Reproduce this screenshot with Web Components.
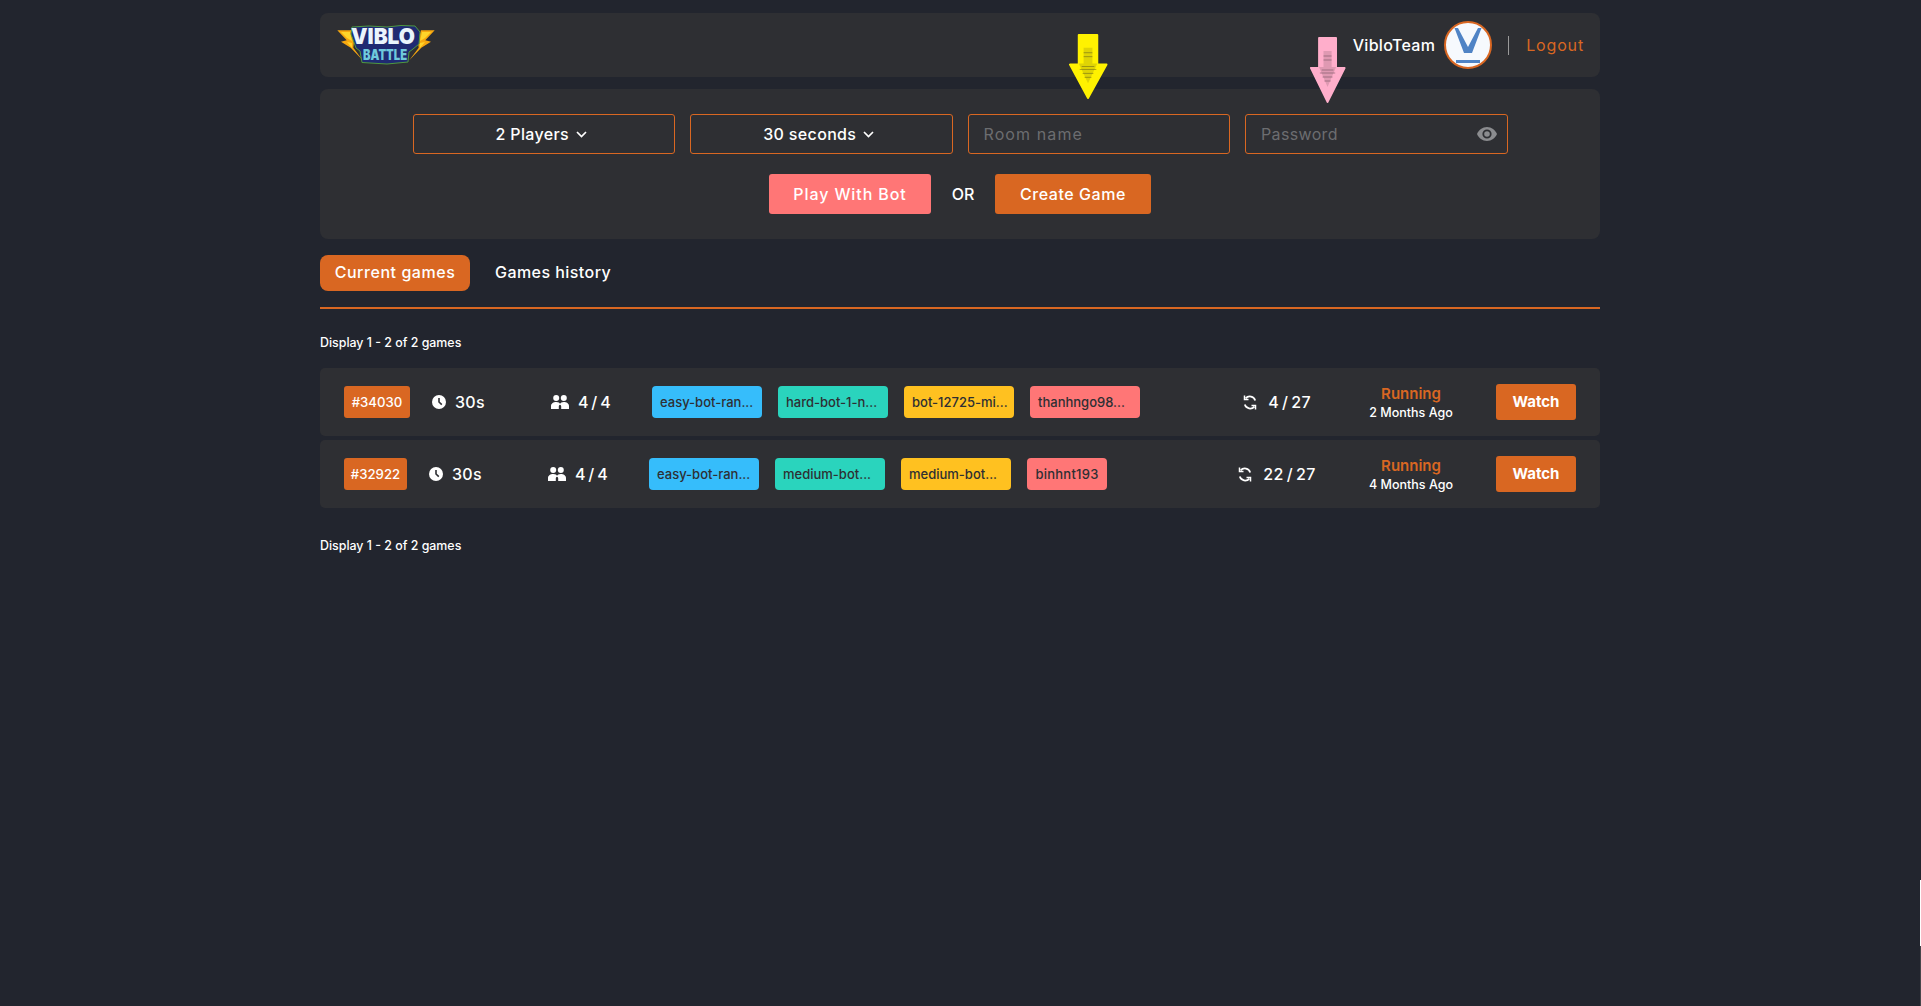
<!DOCTYPE html>
<html>
<head>
<meta charset="utf-8">
<title>Viblo Battle</title>
<style>
  html, body { margin: 0; min-height: 100%; background: #22252e; }
  body { width: 1920px; min-height: 1006px; color: #fff; font-family: Inter, "Open Sans", sans-serif; overflow: hidden; }
</style>
</head>
<body>
<battle-app></battle-app>
<edge-strip></edge-strip>

<script>
const ORANGE = '#d96722';

class BattleLogo extends HTMLElement {
  constructor() {
    super();
    this.attachShadow({ mode: 'open' });
    this.shadowRoot.innerHTML = `
      <style>
        :host { display: block; width: 98px; height: 42px; }
        svg { display: block; overflow: visible; }
        text { font-family: Inter, sans-serif; font-weight: 900; text-anchor: middle; paint-order: stroke; }
      </style>
      <svg width="98" height="42" viewBox="0 0 98 42">
        <path d="M0.3 6.3 H14 L17 17 L16.3 23.7 L25.7 36.3 L13.7 23.7 L4 17.7 L9.7 16.3 Z" fill="#f7a80f"/>
        <path d="M4 8 H13 L15 17 L10 14 Z M10 18 L15 19 L15 24 Z" fill="#ffd52a"/>
        <path d="M97.7 6.3 H84 L81 17 L81.7 23.7 L72.3 36.3 L84.3 23.7 L94 17.7 L88.3 16.3 Z" fill="#f7a80f"/>
        <path d="M94 8 H85 L83 17 L88 14 Z M88 18 L83 19 L83 24 Z" fill="#ffd52a"/>
        <path d="M15 3 L32 2 L50 3 L64 1.5 L78 2 L83 8 L82 20 L76 25 L72 28 L71 38 L50 40 L25 38.5 L23 27 L19 24 L14 10 Z" fill="#1f2a72" stroke="#4f9a40" stroke-width="1"/>
        <text x="46" y="20" font-size="22" fill="#eaf5fc" textLength="64" lengthAdjust="spacingAndGlyphs">VIBLO</text>
        <text x="48" y="36" font-size="14" fill="#6fc9dc" textLength="44" lengthAdjust="spacingAndGlyphs">BATTLE</text>
      </svg>`;
  }
}

class UserAvatar extends HTMLElement {
  constructor() {
    super();
    this.attachShadow({ mode: 'open' });
    this.shadowRoot.innerHTML = `
      <style>
        :host { display: block; width: 48px; height: 48px; }
        svg { display: block; }
      </style>
      <svg width="48" height="48" viewBox="0 0 48 48">
        <circle cx="24" cy="24" r="23" fill="#f6f9fd" stroke="${ORANGE}" stroke-width="2"/>
        <path d="M10.5 7 L14 7 L24 26 L34 7 L37.5 7 L28 32 L20 32 Z" fill="#4f83c5"/>
        <rect x="12" y="39" width="24" height="3" fill="#4f83c5"/>
      </svg>`;
  }
}

class TopBar extends HTMLElement {
  constructor() {
    super();
    this.attachShadow({ mode: 'open' });
    this.shadowRoot.innerHTML = `
      <style>
        :host {
          display: flex;
          align-items: center;
          justify-content: space-between;
          height: 64px;
          padding: 0 16px 0 17px;
          box-sizing: border-box;
          background: #2e2f33;
          border-radius: 8px;
        }
        .user { display: flex; align-items: center; font-size: 16px; font-weight: 500; letter-spacing: 0.3px; }
        .user user-avatar { margin-left: 9px; }
        .sep { width: 1px; height: 19px; background: #9a9a9a; margin: 0 17px 0 16px; }
        .logout { color: ${ORANGE}; font-weight: 400; letter-spacing: 0.85px; }
      </style>
      <battle-logo></battle-logo>
      <div class="user">
        <span>VibloTeam</span>
        <user-avatar></user-avatar>
        <span class="sep"></span>
        <span class="logout">Logout</span>
      </div>`;
  }
}

class FieldBox extends HTMLElement {
  constructor() {
    super();
    this.attachShadow({ mode: 'open' });
    const chevron = `<svg class="chev" width="11" height="7" viewBox="0 0 11 7"><path d="M1 1 L5.5 5.5 L10 1" fill="none" stroke="#fff" stroke-width="1.7"/></svg>`;
    const eye = `<svg class="eye" width="20" height="14" viewBox="0 0 20 14"><path fill-rule="evenodd" fill="#8b8c8f" d="M10 0C5.5 0 1.7 2.9 0 7c1.7 4.1 5.5 7 10 7s8.3-2.9 10-7c-1.7-4.1-5.5-7-10-7zm0 11.6A4.6 4.6 0 1 1 10 2.4a4.6 4.6 0 0 1 0 9.2zm0-7.4a2.8 2.8 0 1 0 0 5.6 2.8 2.8 0 0 0 0-5.6z"/></svg>`;
    const kind = this.getAttribute('kind');
    this.shadowRoot.innerHTML = `
      <style>
        :host {
          display: flex;
          align-items: center;
          height: 40px;
          box-sizing: border-box;
          border: 1px solid ${ORANGE};
          border-radius: 3px;
          padding: 0 15px;
          font-size: 16px;
          letter-spacing: 0.35px;
        }
        :host([kind="select"]) { justify-content: center; font-weight: 500; padding-right: 20px; }
        :host([kind="input"]) { color: #6c6d70; }
        .chev { margin-left: 7px; }
        .eye { margin-left: auto; margin-right: -5px; }
      </style>
      <slot></slot>${kind === 'select' ? chevron : ''}${this.hasAttribute('eye') ? eye : ''}`;
  }
}

class ActionButton extends HTMLElement {
  constructor() {
    super();
    this.attachShadow({ mode: 'open' });
    this.shadowRoot.innerHTML = `
      <style>
        :host {
          display: inline-flex;
          align-items: center;
          justify-content: center;
          height: 40px;
          box-sizing: border-box;
          border-radius: 3px;
          background: var(--bg, ${ORANGE});
          font-size: 16px;
          font-weight: 500;
          letter-spacing: 0.35px;
        }
      </style>
      <slot></slot>`;
  }
}

class CreatePanel extends HTMLElement {
  constructor() {
    super();
    this.attachShadow({ mode: 'open' });
    this.shadowRoot.innerHTML = `
      <style>
        :host {
          display: block;
          height: 150px;
          box-sizing: border-box;
          padding-top: 25px;
          background: #2e2f33;
          border-radius: 8px;
        }
        .fields { display: grid; grid-template-columns: repeat(4, 262.5px); gap: 15px; justify-content: center; }
        .actions { display: flex; justify-content: center; align-items: center; margin-top: 20px; }
        .bot { --bg: #ff7676; width: 162px; letter-spacing: 0.9px; }
        .create { width: 156px; letter-spacing: 0.55px; }
        .or { width: 64px; text-align: center; font-size: 16px; font-weight: 500; padding-bottom: 1px; }
        .room { letter-spacing: 1.1px; }
      </style>
      <div class="fields">
        <field-box kind="select">2 Players</field-box>
        <field-box kind="select">30 seconds</field-box>
        <field-box kind="input" class="room">Room name</field-box>
        <field-box kind="input" eye>Password</field-box>
      </div>
      <div class="actions">
        <action-button class="bot">Play With Bot</action-button>
        <span class="or">OR</span>
        <action-button class="create">Create Game</action-button>
      </div>`;
  }
}

class GameTabs extends HTMLElement {
  constructor() {
    super();
    this.attachShadow({ mode: 'open' });
    this.shadowRoot.innerHTML = `
      <style>
        :host {
          display: flex;
          align-items: center;
          margin-top: 16px;
          padding-bottom: 16px;
          border-bottom: 2px solid ${ORANGE};
          font-size: 16px;
          font-weight: 500;
          letter-spacing: 0.45px;
        }
        .tab { height: 36px; display: flex; align-items: center; padding: 0 14px 2px; box-sizing: border-box; border-radius: 8px; }
        .tab.on { background: ${ORANGE}; width: 150px; justify-content: center; padding: 0 0 2px; margin-right: 11px; letter-spacing: 0.55px; }
      </style>
      <div class="tab on">Current games</div>
      <div class="tab">Games history</div>`;
  }
}

class PlayerTag extends HTMLElement {
  constructor() {
    super();
    this.attachShadow({ mode: 'open' });
    this.shadowRoot.innerHTML = `
      <style>
        :host {
          display: block;
          width: 110px;
          height: 32px;
          line-height: 32px;
          box-sizing: border-box;
          padding: 0 8px;
          border-radius: 4px;
          background: var(--tag);
          color: #2e2f33;
          font-size: 13px;
          font-weight: 500;
          white-space: nowrap;
          flex: none;
        }
        :host([short]) { width: 80px; text-align: center; padding: 0; letter-spacing: 0.25px; }
      </style>
      <slot></slot>`;
  }
}

class GameRow extends HTMLElement {
  constructor() {
    super();
    this.attachShadow({ mode: 'open' });
    const a = (n) => this.getAttribute(n);
    this.shadowRoot.innerHTML = `
      <style>
        :host {
          display: flex;
          align-items: center;
          height: 68px;
          box-sizing: border-box;
          padding: 0 24px;
          background: #2e2f33;
          border-radius: 5px;
        }
        .id {
          width: ${a('idw')}px;
          height: 32px;
          line-height: 32px;
          text-align: center;
          border-radius: 3px;
          background: ${ORANGE};
          font-size: 13.2px;
          font-weight: 500;
          margin-right: 22px;
          flex: none;
        }
        .stat { display: flex; align-items: center; font-size: 16px; font-weight: 500; letter-spacing: 0.3px; padding-bottom: 1px; box-sizing: border-box; }
        .stat svg { margin-top: 1px; flex: none; }
        .time { width: 119px; gap: 9px; }
        .players { width: 101px; gap: 9px; word-spacing: -2px; }
        .tags { display: flex; gap: 16px; }
        .turns { margin-left: auto; width: 154px; justify-content: center; gap: 11px; word-spacing: -1.5px; }
        .status { width: 114px; margin: 2px 28px 0 0; text-align: center; }
        .run { color: ${ORANGE}; font-size: 15px; font-weight: 600; line-height: 18px; }
        .ago { font-size: 12.5px; font-weight: 500; line-height: 18px; margin-top: 1px; }
        .watch { width: 80px; height: 36px; padding-bottom: 2px; font-size: 15px; font-weight: 700; letter-spacing: 0; }
      </style>
      <span class="id">${a('game')}</span>
      <span class="stat time">
        <svg width="14" height="14" viewBox="0 0 14 14"><circle cx="7" cy="7" r="7" fill="#fff"/><path d="M7 3 V7 L9.8 9.6" fill="none" stroke="#2e2f33" stroke-width="1.6"/></svg>
        30s
      </span>
      <span class="stat players">
        <svg width="18" height="14" viewBox="0 0 18 14"><circle cx="5.2" cy="3" r="3" fill="#fff"/><circle cx="12.8" cy="3" r="3" fill="#fff"/><path d="M0 14 V11 C0 8.5 2.5 7 5.2 7 C7.6 7 8.7 8 9 8.8 C9.6 8 10.6 7 12.8 7 C15.5 7 18 8.5 18 11 V14 H10.2 V11.5 C10.2 10.8 9.9 10.2 9 9.8 C8.1 10.2 7.8 10.8 7.8 11.5 V14 Z" fill="#fff"/></svg>
        4 / 4
      </span>
      <div class="tags"><slot></slot></div>
      <span class="stat turns">
        <svg width="14" height="15" viewBox="0 0 14 15" fill="none" stroke="#fff" stroke-width="1.7"><path d="M12.2 5.4 A5.6 5.6 0 0 0 2.6 3.4"/><path d="M1.8 9.6 A5.6 5.6 0 0 0 11.4 11.6"/><path d="M1.5 0.6 V4.6 H5.5" stroke-width="1.5"/><path d="M12.5 14.4 V10.4 H8.5" stroke-width="1.5"/></svg>
        ${a('turns')}
      </span>
      <div class="status">
        <div class="run">Running</div>
        <div class="ago">${a('ago')}</div>
      </div>
      <action-button class="watch">Watch</action-button>`;
  }
}

class ArrowMark extends HTMLElement {
  constructor() {
    super();
    this.attachShadow({ mode: 'open' });
    const c = this.getAttribute('color');
    const d = this.getAttribute('dark');
    const w = this.getAttribute('w');
    const h = this.getAttribute('h');
    this.shadowRoot.innerHTML = `
      <style>
        :host { position: absolute; display: block; }
        svg { display: block; }
      </style>
      <svg width="${w}" height="${h}" viewBox="0 0 40 66" preserveAspectRatio="none">
        <path d="M10 1 H29 V31 H38.5 L19.5 65 L1 31 H10 Z" fill="${c}" stroke="${c}" stroke-width="2" stroke-linejoin="round"/>
        <path d="M15 14 H24 V30 H29 L19.5 50 L10 30 H15 Z" fill="${d}" opacity="0.16"/>
        <path d="M15 19 H24 M15 23 H24 M13 33 H26 M11 36 H28 M14 40 H25 M16 44 H23" stroke="${d}" stroke-width="1" opacity="0.4"/>
      </svg>`;
  }
}

// 1px sliver at the window's right edge, it sits outside the page column
class EdgeStrip extends HTMLElement {
  constructor() {
    super();
    this.attachShadow({ mode: 'open' });
    this.shadowRoot.innerHTML = `
      <style>
        :host {
          position: fixed;
          left: 1920px;
          top: 880px;
          width: 1px;
          height: 126px;
          background: linear-gradient(#fff 0 66px, #45464a 66px);
        }
      </style>`;
  }
}

class BattleApp extends HTMLElement {
  constructor() {
    super();
    this.attachShadow({ mode: 'open' });
    this.shadowRoot.innerHTML = `
      <style>
        :host {
          display: block;
          position: relative;
          width: 1280px;
          margin: 0 auto;
          padding-top: 13px;
        }
        create-panel { margin-top: 12px; }
        .count { font-size: 12.4px; font-weight: 500; line-height: 16px; }
        .top { margin-top: 26px; }
        .rows { display: grid; gap: 4px; margin-top: 17px; }
        .bottom { margin-top: 30px; }
        .yellow { left: 749px; top: 34px; }
        .pink { left: 990px; top: 37px; }
        player-tag.blue { --tag: #36bdfb; }
        player-tag.teal { --tag: #2ad4bd; }
        player-tag.gold { --tag: #ffc120; }
        player-tag.red { --tag: #ff7676; }
      </style>
      <top-bar></top-bar>
      <create-panel></create-panel>
      <game-tabs></game-tabs>
      <div class="count top">Display 1 - 2 of 2 games</div>
      <div class="rows">
        <game-row game="#34030" idw="66" turns="4 / 27" ago="2 Months Ago">
          <player-tag class="blue">easy-bot-ran...</player-tag>
          <player-tag class="teal">hard-bot-1-n...</player-tag>
          <player-tag class="gold">bot-12725-mi...</player-tag>
          <player-tag class="red">thanhngo98...</player-tag>
        </game-row>
        <game-row game="#32922" idw="63" turns="22 / 27" ago="4 Months Ago">
          <player-tag class="blue">easy-bot-ran...</player-tag>
          <player-tag class="teal">medium-bot...</player-tag>
          <player-tag class="gold">medium-bot...</player-tag>
          <player-tag class="red" short>binhnt193</player-tag>
        </game-row>
      </div>
      <div class="count bottom">Display 1 - 2 of 2 games</div>
      <arrow-mark class="yellow" w="39" h="65" color="#fff200" dark="#3a3a20"></arrow-mark>
      <arrow-mark class="pink" w="36" h="66" color="#ffaecb" dark="#3a2a30"></arrow-mark>`;
  }
}

customElements.define('battle-logo', BattleLogo);
customElements.define('user-avatar', UserAvatar);
customElements.define('top-bar', TopBar);
customElements.define('field-box', FieldBox);
customElements.define('action-button', ActionButton);
customElements.define('create-panel', CreatePanel);
customElements.define('game-tabs', GameTabs);
customElements.define('player-tag', PlayerTag);
customElements.define('game-row', GameRow);
customElements.define('arrow-mark', ArrowMark);
customElements.define('edge-strip', EdgeStrip);
customElements.define('battle-app', BattleApp);
</script>
</body>
</html>
